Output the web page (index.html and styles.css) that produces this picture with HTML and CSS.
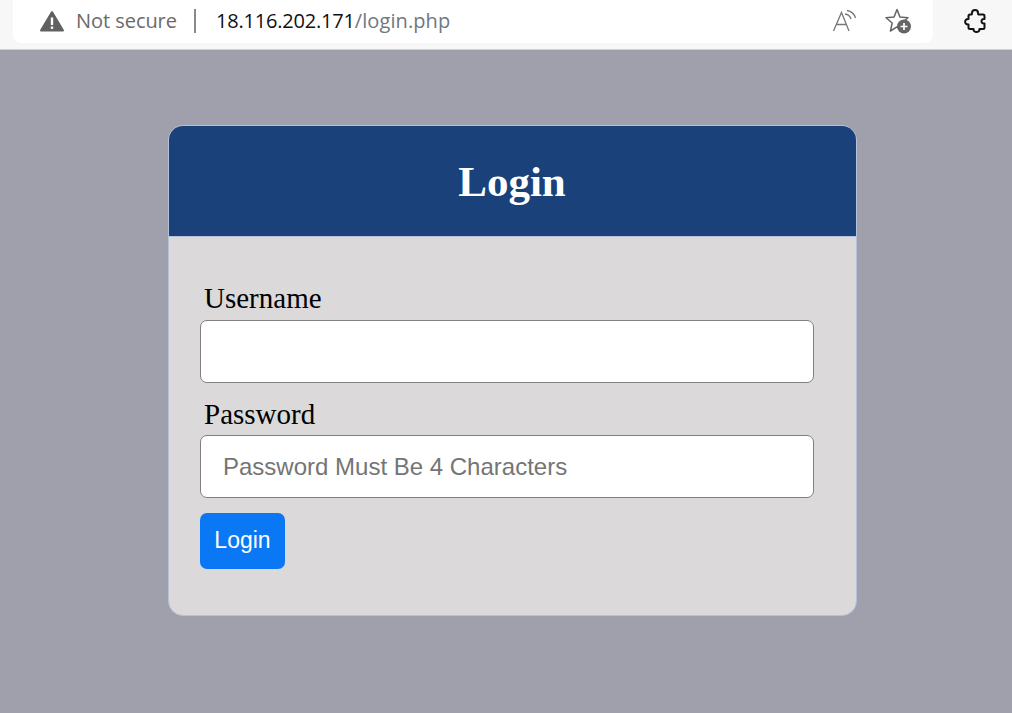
FILE: index.html
```html
<!DOCTYPE html>
<html lang="en">
<head>
<meta charset="utf-8">
<title>Login</title>
<link rel="stylesheet" href="styles.css">
</head>
<body>
<header class="chrome">
  <div class="address">
    <div class="address-left">
      <svg class="warn" width="26" height="24" viewBox="0 0 26 24"><path d="M13 3 L24 21.500 H2 Z" fill="#616161" stroke="#616161" stroke-width="2" stroke-linejoin="round"/><rect x="11.800" y="8.500" width="2.400" height="7.500" fill="#fff"/><rect x="11.800" y="17.500" width="2.400" height="2.400" fill="#fff"/></svg>
      <span class="secure">Not secure</span>
      <span class="divider"></span>
      <span class="url"><span class="host">18.116.202.171</span><span class="path">/login.php</span></span>
    </div>
    <div class="address-right">
      <svg class="read" width="26" height="24" viewBox="0 0 26 24" fill="none" stroke="#777" stroke-width="1.300"><path d="M1.500 22 L9.500 3.500 L17 22 M4.300 15.500 H14.500"/><path d="M13 5 Q17.500 5.500 19 10 M15 1.500 Q21.500 2.500 23.500 9"/></svg>
      <svg class="fav" width="28" height="26" viewBox="0 0 28 26"><path d="M13 1.500 L16 9.100 L24 9.700 L17.800 15 L19.600 23 L13 18.800 L6.400 23 L8.200 15 L2 9.700 L10 9.100 Z" fill="none" stroke="#666" stroke-width="1.500" stroke-linejoin="round"/><circle cx="20" cy="18.500" r="7" fill="#666"/><path d="M20 15 V22 M16.500 18.500 H23.500" stroke="#fff" stroke-width="1.700"/></svg>
    </div>
  </div>
  <svg class="puzzle" width="24" height="26" viewBox="0 0 24 26"><path d="M9 5 C9 1 15 1 15 5 C15 6 15 6.500 15.500 6.500 H20 C21 6.500 21.500 7 21.500 8 V11 C17.500 10 17.500 16.500 21.500 15.500 V19.500 C21.500 20.500 21 21 20 21 H16.500 C17 25 10 25 10.500 21 H7 C6 21 5.500 20.500 5.500 19.500 V16.500 C1 17 1 10.500 5.500 11 V8 C5.500 7 6 6.500 7 6.500 H8.500 C9 6.500 9 6 9 5 Z" fill="none" stroke="#111" stroke-width="2" stroke-linejoin="round"/></svg>
</header>
<main class="stage">
  <section class="card">
    <div class="card-head"><h1>Login</h1></div>
    <form class="card-body">
      <label class="field-label" for="username">Username</label>
      <input class="field" id="username" type="text">
      <label class="field-label" for="password">Password</label>
      <input class="field" id="password" type="password" placeholder="Password Must Be 4 Characters">
      <button class="btn" type="button">Login</button>
    </form>
  </section>
</main>
</body>
</html>
```
FILE: styles.css
```css
* { box-sizing: border-box; }
html, body { margin: 0; height: 100%; }
body {
  background: #a0a0ac;
  display: flex;
  flex-direction: column;
  height: 713px;
  overflow: hidden;
  font-family: "Liberation Serif", serif;
}
.chrome {
  height: 50px;
  flex: none;
  background: #f7f7f7;
  border-bottom: 1px solid #cfcfd2;
  display: flex;
  align-items: flex-start;
  padding-left: 13px;
}
.address {
  width: 920px;
  height: 43px;
  background: #fff;
  border-radius: 0 0 8px 8px;
  display: flex;
  justify-content: space-between;
  align-items: center;
  padding: 0 21px 2px 26px;
  font-family: "Open Sans", sans-serif;
  font-size: 20px;
  color: #6a6a6a;
}
.address-left, .address-right { display: flex; align-items: center; }
.address-right { gap: 25px; }
.read { margin-right: 1px; }
.secure { margin-left: 11px; letter-spacing: -0.050px; }
.divider { width: 2px; height: 24px; background: #8a8a8a; margin: 0 20px 0 17px; }
.path { color: #6f7781; letter-spacing: 0.100px; }
.host { color: #111; letter-spacing: -0.200px; }
.puzzle { margin: 8px 0 0 30px; }
.stage {
  flex: 1;
  padding: 75px 0 0 168px;
}
.card {
  width: 689px;
  height: 491px;
  border: 1px solid #b4c1d6;
  border-radius: 15px;
  background: #dbd9da;
  overflow: hidden;
}
.card-head {
  height: 111px;
  background: #1a4179;
  border-bottom: 1px solid #b4c1d6;
  display: flex;
  align-items: center;
  justify-content: center;
  padding-right: 1px;
}
.card-head h1 {
  margin: 0;
  color: #fff;
  font-size: 43px;
  font-weight: 700;
  line-height: 1;
}
.card-body {
  display: flex;
  flex-direction: column;
  align-items: flex-start;
  padding: 45px 0 0 31px;
}
.field-label {
  font-size: 29px;
  line-height: 32px;
  color: #000;
  margin: 0 0 5px 4px;
}
.field-label:first-child { margin-bottom: 6px; }
.field {
  width: 614px;
  height: 63px;
  border: 1px solid #808080;
  border-radius: 7px;
  background: #fff;
  padding: 0 22px;
  margin-bottom: 15px;
  font-family: "Liberation Sans", sans-serif;
  font-size: 24px;
}
.field::placeholder { color: #757575; opacity: 1; }
.btn {
  width: 85px;
  height: 56px;
  border: 0;
  border-radius: 7px;
  background: #0a78f5;
  color: #fff;
  font-family: "Liberation Sans", sans-serif;
  font-size: 23px;
  padding: 0 0 2px;
}
```
